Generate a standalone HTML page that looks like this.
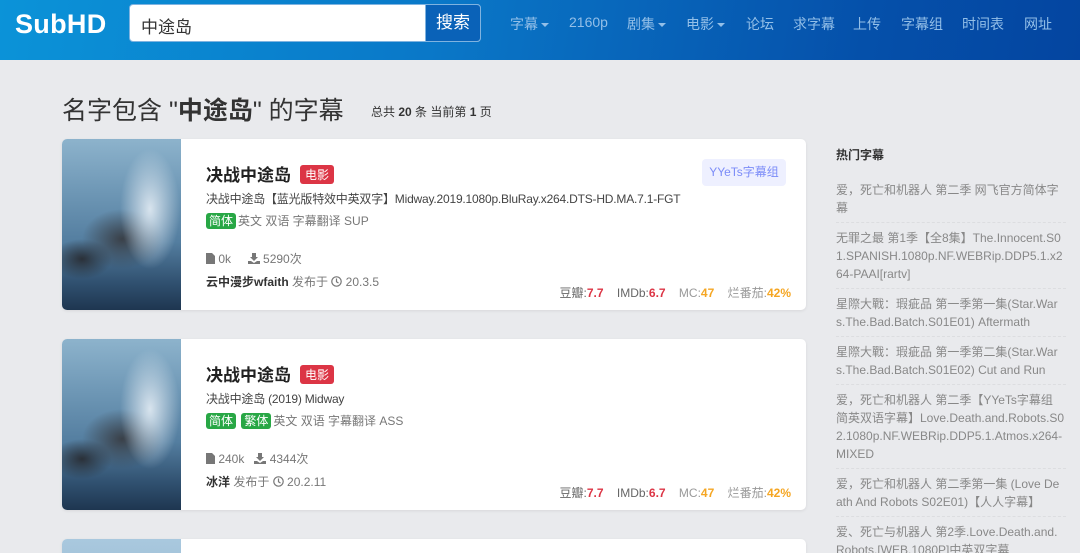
<!DOCTYPE html>
<html><head><meta charset="utf-8"><style>
*{margin:0;padding:0;box-sizing:border-box}
html,body{width:1080px;height:553px;overflow:hidden}
body{background:#e9eaed;font-family:"Liberation Sans","Noto Sans CJK SC",sans-serif;color:#333;position:relative}
.hdr{position:absolute;left:0;top:0;width:1080px;height:60px;background:linear-gradient(100deg,#0b93d8 0%,#0a78c8 40%,#0550aa 80%,#0445a0 100%)}
.logo{position:absolute;left:15px;top:9px;color:#fff;font-size:27px;font-weight:bold;letter-spacing:.3px}
.search{position:absolute;left:129px;top:4px;width:352px;height:38px;background:#fff;border-radius:4px;border:1px solid #7fb3e0}
.search span{position:absolute;left:11px;top:8px;font-size:17px;color:#333}
.btn{position:absolute;right:-1px;top:-1px;width:56px;height:38px;background:#0a62b8;border:1px solid #7fb3e0;border-radius:0 4px 4px 0;color:#fff;font-size:17px;text-align:center;line-height:36px}
.nav{position:absolute;top:14px;font-size:14px;color:#93bfe8}
.car{display:inline-block;border-left:4px solid transparent;border-right:4px solid transparent;border-top:4px solid #93bfe8;vertical-align:middle;margin-left:3px}
h1{position:absolute;left:62px;top:91px;font-size:25px;font-weight:normal;color:#333}
.cnt{position:absolute;left:371px;top:103px;font-size:12px;color:#333}
.card{position:absolute;left:62px;width:744px;height:171px;background:#fff;border-radius:5px;box-shadow:0 1px 3px rgba(0,0,0,.08);overflow:hidden}
.post{position:absolute;left:0;top:0;width:119px;height:100%;background:
radial-gradient(ellipse 30px 60px at 88px 70px,#d8e4ee,transparent),
radial-gradient(ellipse 40px 30px at 60px 100px,#3a4048,transparent),
radial-gradient(ellipse 30px 20px at 20px 120px,#2a3038,transparent),
linear-gradient(180deg,#8db3cc 0%,#6f98b6 30%,#547ea0 60%,#2f4f6e 85%,#1e3650 100%)}
.t{position:absolute;left:144px;top:22px;font-size:17px;font-weight:bold;color:#222}
.badge{display:inline-block;background:#dc3545;color:#fff;font-size:12px;font-weight:normal;padding:1px 5px;border-radius:3px;margin-left:9px;vertical-align:2px}
.sub{position:absolute;left:144px;top:51px;font-size:12px;color:#444;letter-spacing:-.2px}
.tags{position:absolute;left:144px;top:73px;font-size:12px;color:#777}
.g{background:#28a745;color:#fff;padding:1px 3px;border-radius:3px;margin-right:2px}
.st{position:absolute;left:144px;top:111px;font-size:12px;color:#777}
.au{position:absolute;left:144px;top:134px;font-size:12px;color:#777}
.au b{color:#333}
.rt{position:absolute;right:15px;top:145px;font-size:12px;color:#666}
.rt b.r{color:#dc3545}.rt b.y{color:#f5a623}
.grp{position:absolute;left:640px;top:20px;width:84px;height:27px;background:#eef0ff;border-radius:4px;color:#7c8cf8;font-size:12px;text-align:center;line-height:27px}
.ic{display:inline-block;vertical-align:-1px}
.side{position:absolute;left:836px;top:146px;width:230px;height:407px;overflow:hidden}
.side h3{font-size:12px;font-weight:bold;color:#333;margin-bottom:18px}
.it{font-size:12px;line-height:18px;color:#888;padding:6px 0 5px;border-bottom:1px dashed #dcdde0;word-break:break-all}
.it:first-of-type{padding-top:0}
</style></head><body>
<div class="hdr">
<div class="logo">SubHD</div>
<div class="search"><span>中途岛</span><div class="btn">搜索</div></div>
<div class="nav" style="left:510px">字幕<span class="car"></span></div>
<div class="nav" style="left:569px">2160p</div>
<div class="nav" style="left:627px">剧集<span class="car"></span></div>
<div class="nav" style="left:686px">电影<span class="car"></span></div>
<div class="nav" style="left:746px">论坛</div>
<div class="nav" style="left:793px">求字幕</div>
<div class="nav" style="left:853px">上传</div>
<div class="nav" style="left:901px">字幕组</div>
<div class="nav" style="left:962px">时间表</div>
<div class="nav" style="left:1024px">网址</div>
</div>
<h1>名字包含 "<b>中途岛</b>" 的字幕</h1>
<div class="cnt">总共 <b>20</b> 条 当前第 <b>1</b> 页</div>

<div class="card" style="top:139px">
<div class="post"></div>
<div class="t">决战中途岛<span class="badge">电影</span></div>
<div class="sub">决战中途岛【蓝光版特效中英双字】Midway.2019.1080p.BluRay.x264.DTS-HD.MA.7.1-FGT</div>
<div class="tags"><span class="g">简体</span>英文 双语 字幕翻译 SUP</div>
<div class="st"><svg class="ic" width="9" height="11" viewBox="0 0 9 11"><path d="M0 0H6L9 3V11H0Z" fill="#777"/></svg> 0k &nbsp;&nbsp;&nbsp;&nbsp;<svg class="ic" width="12" height="11" viewBox="0 0 12 11"><path d="M4 0H8V4H10L6 8 2 4H4Z M0 8H3L6 10 9 8H12V11H0Z" fill="#777"/></svg> 5290次</div>
<div class="au"><b>云中漫步wfaith</b> 发布于 <svg class="ic" width="11" height="11" viewBox="0 0 11 11"><circle cx="5.5" cy="5.5" r="4.7" fill="none" stroke="#777" stroke-width="1.2"/><path d="M5.5 2.5V5.8L7.5 7" fill="none" stroke="#777" stroke-width="1.2"/></svg> 20.3.5</div>
<div class="grp">YYeTs字幕组</div>
<div class="rt">豆瓣:<b class="r">7.7</b> &nbsp;&nbsp; IMDb:<b class="r">6.7</b> &nbsp;&nbsp; <span style="color:#999">MC:</span><b class="y">47</b> &nbsp;&nbsp; <span style="color:#999">烂番茄:</span><b class="y">42%</b></div>
</div>

<div class="card" style="top:339px">
<div class="post"></div>
<div class="t">决战中途岛<span class="badge">电影</span></div>
<div class="sub">决战中途岛 (2019) Midway</div>
<div class="tags"><span class="g">简体</span> <span class="g">繁体</span>英文 双语 字幕翻译 ASS</div>
<div class="st"><svg class="ic" width="9" height="11" viewBox="0 0 9 11"><path d="M0 0H6L9 3V11H0Z" fill="#777"/></svg> 240k &nbsp;&nbsp;<svg class="ic" width="12" height="11" viewBox="0 0 12 11"><path d="M4 0H8V4H10L6 8 2 4H4Z M0 8H3L6 10 9 8H12V11H0Z" fill="#777"/></svg> 4344次</div>
<div class="au"><b>冰洋</b> 发布于 <svg class="ic" width="11" height="11" viewBox="0 0 11 11"><circle cx="5.5" cy="5.5" r="4.7" fill="none" stroke="#777" stroke-width="1.2"/><path d="M5.5 2.5V5.8L7.5 7" fill="none" stroke="#777" stroke-width="1.2"/></svg> 20.2.11</div>
<div class="rt">豆瓣:<b class="r">7.7</b> &nbsp;&nbsp; IMDb:<b class="r">6.7</b> &nbsp;&nbsp; <span style="color:#999">MC:</span><b class="y">47</b> &nbsp;&nbsp; <span style="color:#999">烂番茄:</span><b class="y">42%</b></div>
</div>

<div class="card" style="top:539px"><div class="post" style="background:linear-gradient(180deg,#a9c8de,#7fa6c4)"></div></div>

<div class="side">
<h3>热门字幕</h3>
<div class="it">爱，死亡和机器人 第二季 网飞官方简体字幕</div>
<div class="it">无罪之最 第1季【全8集】The.Innocent.S01.SPANISH.1080p.NF.WEBRip.DDP5.1.x264-PAAI[rartv]</div>
<div class="it">星際大戰：瑕疵品 第一季第一集(Star.Wars.The.Bad.Batch.S01E01) Aftermath</div>
<div class="it">星際大戰：瑕疵品 第一季第二集(Star.Wars.The.Bad.Batch.S01E02) Cut and Run</div>
<div class="it">爱，死亡和机器人 第二季【YYeTs字幕组 简英双语字幕】Love.Death.and.Robots.S02.1080p.NF.WEBRip.DDP5.1.Atmos.x264-MIXED</div>
<div class="it">爱，死亡和机器人 第二季第一集 (Love Death And Robots S02E01)【人人字幕】</div>
<div class="it">爱、死亡与机器人 第2季.Love.Death.and.Robots.[WEB.1080P]中英双字幕</div>
<div class="it">鬼灭之刃 剧场版 无限列车篇 劇場版「鬼滅</div>
</div>
</body></html>
